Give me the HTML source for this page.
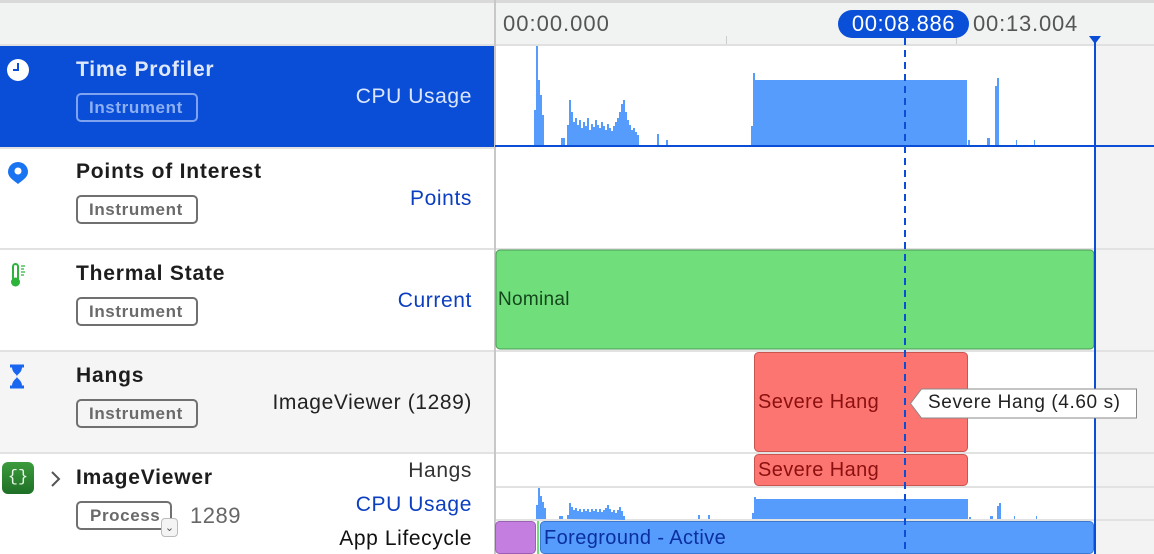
<!DOCTYPE html>
<html><head><meta charset="utf-8"><style>
*{margin:0;padding:0;box-sizing:border-box}
body{width:1154px;height:554px;overflow:hidden;background:#fff;font-family:"Liberation Sans",Arial,sans-serif;position:relative}
.a{position:absolute}
.title{position:absolute;left:76px;font-weight:bold;font-size:21px;letter-spacing:0.8px;color:#1d1d1d}
.badge{position:absolute;left:76px;height:29px;border:2px solid #707070;border-radius:5px;font-size:17px;letter-spacing:0.6px;color:#6a6a6a;padding:3px 10px 0 11px;font-weight:bold;width:122px}
.rl{position:absolute;right:682px;font-size:21px;letter-spacing:0.6px;text-align:right;white-space:nowrap}
.blue{color:#0b3fc0}
.hl{position:absolute;left:0;width:1154px;height:2px;background:#e2e2e2}
</style></head><body>
<div class="a" style="left:0;top:0;width:1154px;height:45px;background:#f1f2f2;border-top:3px solid #d9d9d9"></div>
<div class="a" style="left:0;top:44px;width:1154px;height:2px;background:#e0e0e0"></div>
<div class="a" style="left:503px;top:11px;font-size:22px;letter-spacing:1px;color:#555">00:00.000</div>
<div class="a" style="left:726px;top:36px;width:1px;height:8px;background:#ccc"></div>
<div class="a" style="left:956px;top:36px;width:1px;height:8px;background:#ccc"></div>
<div class="a" style="left:838px;top:10px;width:131px;height:28px;background:#0a4fd8;border-radius:14px;color:#fff;font-size:22px;letter-spacing:0.6px;text-align:center;line-height:28px">00:08.886</div>
<div class="a" style="left:973px;top:11px;font-size:22px;letter-spacing:0.8px;color:#555">00:13.004</div>
<div class="a" style="left:1096px;top:46px;width:58px;height:508px;background:#f3f3f3"></div>
<div class="a" style="left:0;top:46px;width:495px;height:101px;background:#0a4ed8"></div>
<div class="a" style="left:0;top:352px;width:495px;height:100px;background:#f5f5f5"></div>
<div class="hl" style="top:147px;width:495px"></div>
<div class="hl" style="top:248px"></div>
<div class="hl" style="top:350px"></div>
<div class="hl" style="top:452px"></div>
<div class="a" style="left:495px;top:486px;width:659px;height:2px;background:#e2e2e2"></div>
<div class="a" style="left:495px;top:519px;width:659px;height:2px;background:#e2e2e2"></div>
<div class="a" style="left:494px;top:0;width:2px;height:554px;background:#c8c8c8"></div>

<svg class="a" style="left:5px;top:57px" width="26" height="26"><circle cx="13" cy="13" r="11" fill="#fff"/><path d="M13 6v7h-5" stroke="#0a4ed8" stroke-width="2" fill="none"/></svg>
<svg class="a" style="left:6px;top:160px" width="24" height="26"><path d="M12 2a10 10 0 0 1 10 10c0 5-5 8-10 12C7 20 2 17 2 12A10 10 0 0 1 12 2z" fill="#1a73f0"/><circle cx="12" cy="11" r="3.5" fill="#fff"/></svg>
<svg class="a" style="left:9px;top:262px" width="20" height="28"><rect x="4" y="2" width="5" height="17" rx="2.5" fill="none" stroke="#2bb33a" stroke-width="2"/><circle cx="6.5" cy="20" r="4.5" fill="#2bb33a"/><path d="M12 4h4M12 7h3M12 10h4M12 13h3" stroke="#2bb33a" stroke-width="1.3"/></svg>
<svg class="a" style="left:8px;top:364px" width="20" height="26"><path d="M2 2h14M2 23h14" stroke="#1a66f0" stroke-width="3"/><path d="M4 3c0 6 5 7 5 9.5S4 16 4 22h10c0-6-5-7-5-9.5S14 9 14 3z" fill="#1a66f0"/></svg>
<div class="a" style="left:2px;top:462px;width:32px;height:32px;border-radius:6px;background:linear-gradient(#3c9c3c,#1e6f26);color:#e8f6e8;font-size:17px;text-align:center;line-height:31px;font-family:'Liberation Mono',monospace">{}</div>
<svg class="a" style="left:50px;top:470px" width="12" height="18"><path d="M2 2l7 7-7 7" stroke="#555" stroke-width="2" fill="none"/></svg>

<div class="title" style="top:58px;color:#dfe8fb">Time Profiler</div>
<div class="badge" style="top:93px;border-color:#7fa3ee;color:#8eb0f2">Instrument</div>
<div class="rl" style="top:85px;color:#dce6fb">CPU Usage</div>
<div class="title" style="top:160px">Points of Interest</div>
<div class="badge" style="top:195px">Instrument</div>
<div class="rl blue" style="top:187px">Points</div>
<div class="title" style="top:262px">Thermal State</div>
<div class="badge" style="top:297px">Instrument</div>
<div class="rl" style="top:289px;color:#0b3fc0">Current</div>
<div class="title" style="top:364px">Hangs</div>
<div class="badge" style="top:399px">Instrument</div>
<div class="rl" style="top:391px;color:#222">ImageViewer (1289)</div>
<div class="title" style="top:466px">ImageViewer</div>
<div class="badge" style="top:501px;width:96px;padding-left:12px">Process</div>
<div class="a" style="left:161px;top:518px;width:17px;height:19px;border:1px solid #bbb;border-radius:4px;background:#f4f4f4;font-size:11px;text-align:center;color:#555;line-height:18px">⌄</div>
<div class="a" style="left:190px;top:503px;font-size:22px;letter-spacing:0.5px;color:#666">1289</div>
<div class="rl" style="top:459px;color:#333">Hangs</div>
<div class="rl blue" style="top:493px">CPU Usage</div>
<div class="rl" style="top:527px;color:#111">App Lifecycle</div>

<svg class="a" style="left:0;top:0" width="1154" height="554">
<g fill="#559cfc">
<rect x="534" y="110" width="2" height="36"/><rect x="536" y="46" width="2" height="100"/><rect x="538" y="80" width="2" height="66"/><rect x="540" y="95" width="2" height="51"/><rect x="542" y="115" width="2" height="31"/>
<rect x="561" y="138" width="4" height="8"/>
<rect x="567" y="125" width="2" height="21"/><rect x="569" y="100" width="2" height="46"/><rect x="571" y="112" width="2" height="34"/><rect x="573" y="122" width="2" height="24"/><rect x="575" y="118" width="2" height="28"/><rect x="577" y="125" width="2" height="21"/><rect x="579" y="120" width="2" height="26"/><rect x="581" y="128" width="2" height="18"/><rect x="583" y="122" width="2" height="24"/><rect x="585" y="126" width="2" height="20"/><rect x="587" y="118" width="2" height="28"/><rect x="589" y="130" width="2" height="16"/><rect x="591" y="124" width="2" height="22"/><rect x="593" y="127" width="2" height="19"/><rect x="595" y="120" width="2" height="26"/><rect x="597" y="125" width="2" height="21"/><rect x="599" y="128" width="2" height="18"/><rect x="601" y="122" width="2" height="24"/><rect x="603" y="126" width="2" height="20"/><rect x="605" y="130" width="2" height="16"/><rect x="607" y="124" width="2" height="22"/><rect x="609" y="128" width="2" height="18"/><rect x="611" y="131" width="2" height="15"/><rect x="613" y="126" width="2" height="20"/><rect x="615" y="122" width="2" height="24"/><rect x="617" y="118" width="2" height="28"/><rect x="619" y="112" width="2" height="34"/><rect x="621" y="104" width="2" height="42"/><rect x="623" y="100" width="2" height="46"/><rect x="625" y="112" width="2" height="34"/><rect x="627" y="120" width="2" height="26"/><rect x="629" y="125" width="2" height="21"/><rect x="631" y="130" width="2" height="16"/><rect x="633" y="128" width="2" height="18"/><rect x="635" y="132" width="2" height="14"/><rect x="637" y="135" width="2" height="11"/>
<rect x="657" y="134" width="2" height="12"/><rect x="666" y="140" width="2" height="6"/>
<path d="M751 146v-20h2V73h2v7h212V146z"/>
<rect x="968" y="140" width="2" height="6"/><rect x="987" y="138" width="3" height="8"/><rect x="995" y="86" width="2" height="60"/><rect x="997" y="78" width="2" height="68"/><rect x="1016" y="140" width="1" height="6"/><rect x="1034" y="140" width="1" height="6"/>
<rect x="536" y="505" width="2" height="14"/><rect x="538" y="488" width="2" height="31"/><rect x="540" y="496" width="2" height="23"/><rect x="542" y="502" width="2" height="17"/><rect x="544" y="508" width="2" height="11"/>
<rect x="559" y="516" width="4" height="3"/>
<path d="M567 519v-4h2v-12h2v4h2v3h2v-2h2v3h2v-2h2v3h2v-3h2v2h2v-2h2v3h2v-3h2v2h2v-2h2v3h2v-3h2v3h2v-2h2v-2h2v-3h2v4h2v3h2v-2h2v3h2v-3h2v-3h2v4h2v5h2v4z"/>
<rect x="698" y="515" width="2" height="4"/><rect x="708" y="515" width="2" height="4"/>
<path d="M752 519v-6h2v-16h2v2h212v20z"/>
<rect x="969" y="517" width="2" height="2"/><rect x="990" y="516" width="3" height="3"/><rect x="997" y="506" width="2" height="13"/><rect x="999" y="503" width="2" height="16"/><rect x="1014" y="516" width="1" height="3"/><rect x="1036" y="516" width="1" height="3"/>
</g>
<rect x="495" y="145" width="659" height="2" fill="#0a4ed8"/>
<rect x="496" y="250" width="598" height="99" rx="4" fill="#6fde7b" stroke="#4a9a55"/>
<rect x="754.5" y="352.5" width="213" height="99" rx="4" fill="#fc7571" stroke="#c95550"/>
<rect x="754.5" y="454.5" width="213" height="31" rx="4" fill="#fc7571" stroke="#c95550"/>
<rect x="495.5" y="521.5" width="40" height="32" rx="4" fill="#c47ee0" stroke="#9b5fb5"/>
<rect x="537" y="521" width="2" height="33" fill="#6fde7b"/>
<rect x="540.5" y="521.5" width="553" height="32" rx="4" fill="#559cfc" stroke="#3d78d0"/>
<line x1="905" y1="38" x2="905" y2="554" stroke="#0a4ed8" stroke-width="2" stroke-dasharray="7,5"/>
<line x1="1095" y1="36" x2="1095" y2="554" stroke="#0a4ed8" stroke-width="2"/>
<path d="M1089 36h12l-6 8z" fill="#0a4ed8"/>
<path d="M910.5 403.5l11-14.5h215v29h-215z" fill="#fff" stroke="#888"/>
</svg>
<div class="a" style="left:498px;top:289px;font-size:19px;letter-spacing:0.3px;color:#14461c">Nominal</div>
<div class="a" style="left:758px;top:391px;font-size:20px;letter-spacing:0.4px;color:#8b1010">Severe Hang</div>
<div class="a" style="left:758px;top:459px;font-size:20px;letter-spacing:0.4px;color:#8b1010">Severe Hang</div>
<div class="a" style="left:928px;top:392px;font-size:19px;letter-spacing:0.6px;color:#222">Severe Hang (4.60 s)</div>
<div class="a" style="left:544px;top:527px;font-size:20px;letter-spacing:0.4px;color:#0b2fa0">Foreground - Active</div>
</body></html>
